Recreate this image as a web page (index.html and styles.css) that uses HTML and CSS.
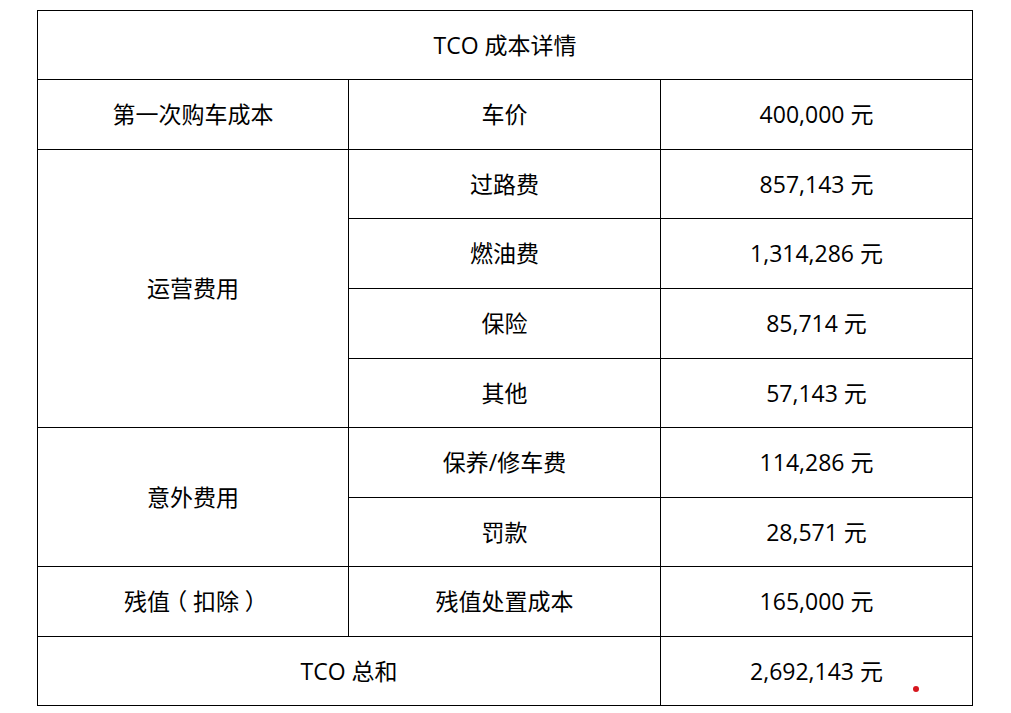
FILE: index.html
```html
<!DOCTYPE html>
<html lang="zh-CN">
<head>
<meta charset="utf-8">
<title>TCO 成本详情</title>
<link rel="stylesheet" href="styles.css">
</head>
<body>
<div class="tco">
  <div class="cell span3">TCO 成本详情</div>

  <div class="cell">第一次购车成本</div>
  <div class="cell">车价</div>
  <div class="cell">400,000 元</div>

  <div class="cell rows4">运营费用</div>
  <div class="cell">过路费</div>
  <div class="cell">857,143 元</div>
  <div class="cell">燃油费</div>
  <div class="cell">1,314,286 元</div>
  <div class="cell">保险</div>
  <div class="cell">85,714 元</div>
  <div class="cell">其他</div>
  <div class="cell">57,143 元</div>

  <div class="cell rows2">意外费用</div>
  <div class="cell">保养/修车费</div>
  <div class="cell">114,286 元</div>
  <div class="cell">罚款</div>
  <div class="cell">28,571 元</div>

  <div class="cell">残值<span class="paren">（</span>扣除<span class="paren">）</span></div>
  <div class="cell">残值处置成本</div>
  <div class="cell">165,000 元</div>

  <div class="cell span2">TCO 总和</div>
  <div class="cell total">2,692,143 元<span class="dot"></span></div>
</div>
</body>
</html>
```
FILE: styles.css
```css
html, body {
  margin: 0;
  padding: 0;
  background: #ffffff;
}
body {
  padding: 10px 0 0 37px;
  font-family: "Open Sans", "Noto Sans", "Noto Sans CJK SC", sans-serif;
  color: #000000;
}
.tco {
  display: grid;
  width: 936px;
  box-sizing: border-box;
  grid-template-columns: 311px 312px 312px;
  grid-template-rows: 69px 70px 69px 70px 70px 69px 70px 69px 70px 69px;
  border-left: 1px solid #000;
  border-top: 1px solid #000;
}
.cell {
  display: flex;
  align-items: center;
  justify-content: center;
  border-right: 1px solid #000;
  border-bottom: 1px solid #000;
  font-size: 23px;
  line-height: 1;
  position: relative;
}
.span3 { grid-column: span 3; }
.span2 { grid-column: span 2; }
.rows4 { grid-row: span 4; }
.rows2 { grid-row: span 2; }
.paren {
  display: inline-block;
  width: 1em;
  text-align: center;
  font-feature-settings: "halt";
}
.dot {
  position: absolute;
  left: 252px;
  top: 49px;
  width: 6px;
  height: 6px;
  border-radius: 50%;
  background: #d6161e;
}
```
